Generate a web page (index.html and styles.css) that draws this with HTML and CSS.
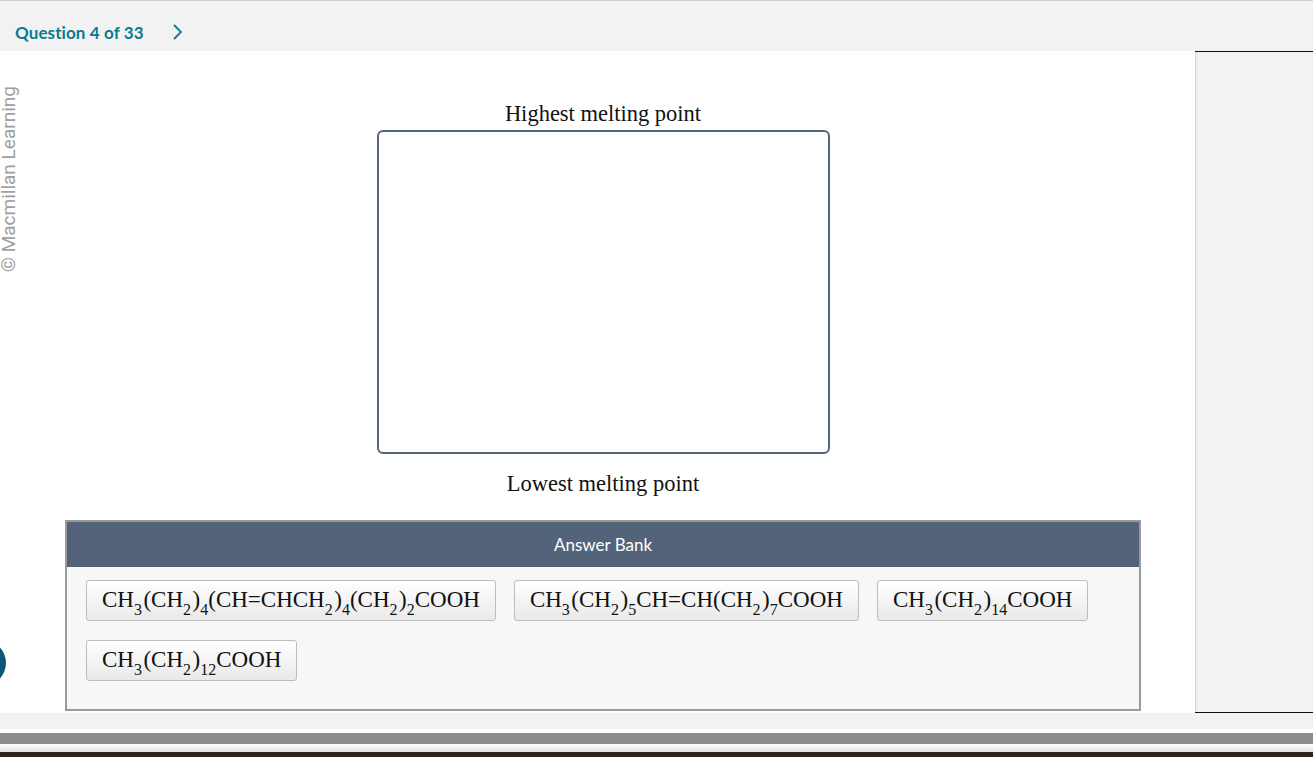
FILE: index.html
```html
<!DOCTYPE html>
<html>
<head>
<meta charset="utf-8">
<link rel="stylesheet" href="styles.css">
</head>
<body>
<div class="topline"></div>
<div class="header">
  <span class="qnum">Question 4 of 33</span>
  <svg class="chev" width="12" height="18" viewBox="0 0 12 18"><path d="M2 2 L9 9 L2 16" fill="none" stroke="#0a7b8f" stroke-width="1.8"/></svg>
</div>
<div class="main">
  <div class="content">
    <div class="watermark">© Macmillan Learning</div>
    <div class="help"></div>
    <div class="label top">Highest melting point</div>
    <div class="dropzone"></div>
    <div class="label bottom">Lowest melting point</div>
    <div class="bank">
      <div class="bank-head">Answer Bank</div>
      <div class="bank-body">
        <div class="chip"><span class="f">CH<sub class="g">3</sub>(CH<sub class="g">2</sub>)<sub>4</sub>(CH=CHCH<sub class="g">2</sub>)<sub>4</sub>(CH<sub class="g">2</sub>)<sub>2</sub>COOH</span></div>
        <div class="chip"><span class="f">CH<sub class="g">3</sub>(CH<sub class="g">2</sub>)<sub>5</sub>CH=CH(CH<sub class="g">2</sub>)<sub>7</sub>COOH</span></div>
        <div class="chip"><span class="f">CH<sub class="g">3</sub>(CH<sub class="g">2</sub>)<sub>14</sub>COOH</span></div>
        <div class="chip"><span class="f">CH<sub class="g">3</sub>(CH<sub class="g">2</sub>)<sub>12</sub>COOH</span></div>
      </div>
    </div>
  </div>
  <div class="side"></div>
</div>
<div class="foot1"></div>
<div class="foot2"></div>
<div class="foot3"></div>
<div class="foot4"></div>
<div class="foot5"></div>
</body>
</html>
```
FILE: styles.css
```css
html, body {
  margin: 0;
  padding: 0;
  background: #ffffff;
  overflow: hidden;
}
body {
  width: 1313px;
  height: 757px;
  font-family: "Liberation Serif", "Times New Roman", serif;
}
.topline {
  height: 1px;
  background: #cfcfcf;
}
.header {
  height: 50px;
  background: #f2f2f2;
  display: flex;
  align-items: center;
  padding-left: 15px;
}
.qnum {
  font-family: "Lato", "Open Sans", sans-serif;
  font-weight: 700;
  font-size: 17px;
  letter-spacing: 0.1px;
  color: #0a7b8f;
  margin-top: 12px;
}
.chev {
  margin-left: 28px;
  margin-top: 12px;
}
.main {
  display: flex;
  height: 662px;
}
.content {
  position: relative;
  width: 1195px;
  box-sizing: border-box;
  padding: 51px 54px 0 65px;
  display: flex;
  flex-direction: column;
  align-items: center;
}
.side {
  flex: 1;
  background: #f2f2f2;
  border-top: 1px solid #111;
  border-bottom: 1px solid #111;
  box-shadow: inset 2px 0 2px -1px #d0d0d0;
}
.watermark {
  position: absolute;
  left: 0;
  top: 221px;
  transform-origin: 0 0;
  transform: rotate(-90deg);
  font-family: "Roboto", "Liberation Sans", sans-serif;
  font-size: 19px;
  color: #a0a0a0;
  white-space: nowrap;
  line-height: 18px;
}
.help {
  position: absolute;
  left: -40px;
  top: 589px;
  width: 46px;
  height: 46px;
  border-radius: 50%;
  background: #0d5679;
}
.label {
  font-size: 22.5px;
  line-height: 24px;
  color: #111;
}
.label.top {
  margin-bottom: 4px;
}
.dropzone {
  width: 453px;
  height: 324px;
  box-sizing: border-box;
  border: 2px solid #576579;
  border-radius: 6px;
  background: #fff;
}
.label.bottom {
  margin-top: 18px;
}
.bank {
  margin-top: 24px;
  align-self: stretch;
  border: 2px solid #9a9a9a;
  background: #f7f7f7;
}
.bank-head {
  height: 45px;
  background: #536379;
  color: #ffffff;
  font-family: "Lato", "Open Sans", sans-serif;
  font-size: 17px;
  display: flex;
  align-items: center;
  justify-content: center;
}
.bank-body {
  display: flex;
  flex-wrap: wrap;
  gap: 19px 18px;
  padding: 13px 19px 28px 19px;
}
.chip {
  height: 41px;
  box-sizing: border-box;
  padding: 0 15px;
  border: 1px solid #bdbdbd;
  border-radius: 3px;
  background: linear-gradient(#ffffff, #e9e9e9);
  color: #111;
  display: flex;
  align-items: center;
  white-space: nowrap;
}
.f {
  font-size: 23px;
  line-height: 26px;
  margin-top: -2px;
}
.f sub {
  font-size: 16px;
  vertical-align: -8px;
  line-height: 0;
}
.f sub.g {
  margin-right: 1.5px;
}
.foot1 {
  height: 16px;
  background: #f2f2f2;
}
.foot2 {
  height: 4px;
  background: #ffffff;
}
.foot3 {
  height: 11px;
  background: #8c8c8c;
}
.foot4 {
  height: 8px;
  background: linear-gradient(#ffffff, #e4e4e4);
}
.foot5 {
  height: 6px;
  background: #2b2520;
}
```
